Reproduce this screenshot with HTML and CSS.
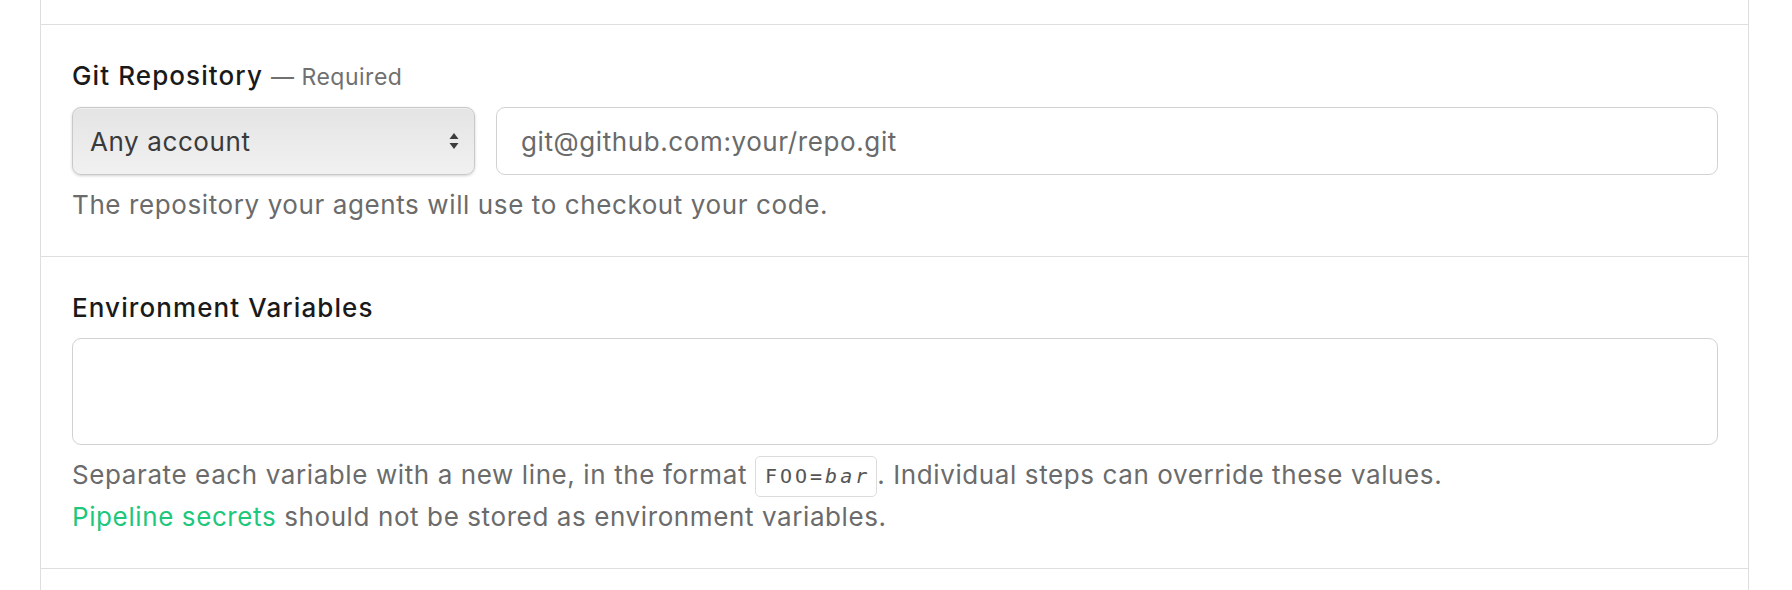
FILE: index.html
```html
<!DOCTYPE html>
<html lang="en">
<head>
<meta charset="utf-8">
<title>Pipeline settings</title>
<link rel="stylesheet" href="styles.css">
</head>
<body>
<div class="card">
  <div class="section section-prev"></div>
  <div class="section">
    <div class="label">Git Repository <span class="req">— Required</span></div>
    <div class="row">
      <div class="select-wrap">
        <select class="select">
          <option>Any account</option>
        </select>
        <svg class="select-arrows" width="12" height="20" viewBox="0 0 12 20" aria-hidden="true">
          <path d="M6 2 L10.5 8 L1.5 8 Z" fill="#3c3c3c"/>
          <path d="M6 18 L10.5 12 L1.5 12 Z" fill="#3c3c3c"/>
        </svg>
      </div>
      <input class="input" type="text" placeholder="git@github.com:your/repo.git">
    </div>
    <p class="help">The repository your agents will use to checkout your code.</p>
  </div>
  <div class="section">
    <div class="label">Environment Variables</div>
    <textarea class="textarea"></textarea>
    <p class="help">Separate each variable with a new line, in the format <code class="code">FOO=<em>bar</em></code>. Individual steps can override these values.<br><a class="link" href="#">Pipeline secrets</a> should not be stored as environment variables.</p>
  </div>
  <div class="section section-next"></div>
</div>
</body>
</html>
```

FILE: styles.css
```css
html, body {
  margin: 0;
  padding: 0;
  background: #ffffff;
}

body {
  font-family: Inter, "Noto Sans", "Liberation Sans", sans-serif;
  font-size: 26px;
  letter-spacing: 0.6px;
  color: #222222;
  overflow: hidden;
}

.card {
  margin: 0 43px 0 40px;
  border-left: 1px solid #dedede;
  border-right: 1px solid #dedede;
}

.section {
  padding: 31px 30px 31px 31px;
  border-bottom: 1px solid #dedede;
}

.section-prev {
  height: 25px;
  padding: 0;
  box-sizing: border-box;
}

.section-next {
  height: 23px;
  padding: 0;
  border-bottom: none;
}

.label {
  font-size: 26px;
  font-weight: 500;
  letter-spacing: 1.1px;
  line-height: 40px;
  color: #1a1a1a;
  margin-bottom: 10px;
}

.req {
  font-size: 23px;
  font-weight: 400;
  letter-spacing: 0.5px;
  color: #707070;
}

.row {
  display: flex;
  gap: 21px;
  align-items: stretch;
}

.select-wrap {
  position: relative;
  width: 403px;
  flex: none;
}

.select {
  -webkit-appearance: none;
  appearance: none;
  width: 100%;
  height: 68px;
  box-sizing: border-box;
  margin: 0;
  padding: 0 40px 0 17px;
  font-family: inherit;
  font-size: 26px;
  letter-spacing: 0.6px;
  color: #3a3a3a;
  border: 1px solid #c9c9c9;
  border-radius: 9px;
  background: linear-gradient(#e4e4e4, #f1f1f1);
  box-shadow: 0 1px 3px rgba(0, 0, 0, 0.18), inset 0 1px 0 rgba(255, 255, 255, 0.4);
  outline: none;
}

.select-arrows {
  position: absolute;
  right: 15px;
  top: 24px;
  pointer-events: none;
}

.input {
  flex: 1;
  min-width: 0;
  height: 68px;
  box-sizing: border-box;
  margin: 0;
  padding: 0 24px;
  font-family: inherit;
  font-size: 26px;
  letter-spacing: 0.6px;
  color: #555555;
  border: 1px solid #d2d2d2;
  border-radius: 9px;
  background: #ffffff;
  outline: none;
}

.input::placeholder {
  color: #6a6a6a;
  opacity: 1;
}

.textarea {
  display: block;
  width: 100%;
  height: 107px;
  box-sizing: border-box;
  margin: 0;
  padding: 12px 24px;
  font-family: inherit;
  font-size: 26px;
  border: 1px solid #d2d2d2;
  border-radius: 9px;
  background: #ffffff;
  resize: none;
  outline: none;
}

.help {
  margin: 10px 0 0 0;
  font-size: 26px;
  line-height: 40px;
  color: #6b6b6b;
}

.code {
  display: inline-block;
  font-family: "DejaVu Sans Mono", "Liberation Mono", monospace;
  font-size: 20px;
  letter-spacing: 3px;
  line-height: 26px;
  color: #555555;
  padding: 6px 6px 7px 9px;
  border: 1px solid #dcdcdc;
  border-radius: 5px;
  vertical-align: 1px;
}

.code em {
  font-style: italic;
}

.link {
  color: #1dc77c;
  text-decoration: none;
}
```
